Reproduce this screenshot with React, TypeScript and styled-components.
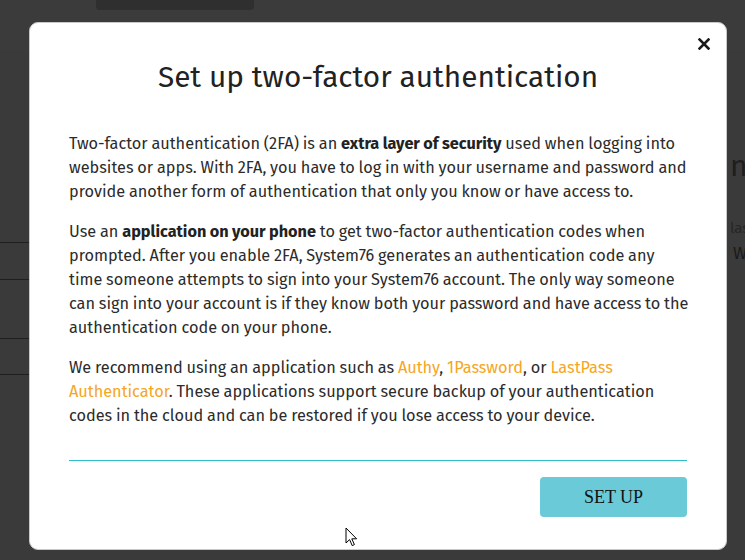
import React from "react";
import styled, { createGlobalStyle } from "styled-components";

const GlobalStyle = createGlobalStyle`
  html, body {
    margin: 0;
    padding: 0;
    background: #3a3a3a;
    overflow: hidden;
  }
  * { box-sizing: border-box; }
`;

const App = () => {
  return (
    <>
      <GlobalStyle />
      <Page>
        <Backdrop>
          <TopBar>
            <Tab />
          </TopBar>
          <Body>
            <Side>
              <SideRow $h={37} />
              <SideRow $h={59} />
              <SideRow $h={37} />
            </Side>
            <Main>
              <BigHeading>nt</BigHeading>
              <MainText>last</MainText>
              <MainText $strong>Wh</MainText>
            </Main>
          </Body>
        </Backdrop>

        <Modal>
          <Close aria-label="close">
            <svg width="12" height="12" viewBox="0 0 12 12">
              <path d="M1.5 1.5 L10.5 10.5 M10.5 1.5 L1.5 10.5" stroke="#1c1c1c" strokeWidth="2.6" strokeLinecap="square" />
            </svg>
          </Close>
          <Title>Set up two-factor authentication</Title>
          <Para>
            Two-factor authentication (2FA) is an <b>extra layer of security</b> used when logging into
            websites or apps. With 2FA, you have to log in with your username and password and
            provide another form of authentication that only you know or have access to.
          </Para>
          <Para>
            Use an <b>application on your phone</b> to get two-factor authentication codes when
            prompted. After you enable 2FA, System76 generates an authentication code any
            time someone attempts to sign into your System76 account. The only way someone
            can sign into your account is if they know both your password and have access to the
            authentication code on your phone.
          </Para>
          <Para>
            We recommend using an application such as <Link>Authy</Link>, <Link>1Password</Link>, or{" "}
            <Link>LastPass Authenticator</Link>. These applications support secure backup of your authentication
            codes in the cloud and can be restored if you lose access to your device.
          </Para>
          <Divider />
          <Footer>
            <SetUpButton>SET UP</SetUpButton>
          </Footer>
        </Modal>

        <Cursor width="13" height="20" viewBox="0 0 13 20">
          <path d="M1 1 L1 16 L4.6 12.6 L7.2 18.6 L9.4 17.6 L6.8 11.8 L11.6 11.8 Z" fill="#fff" stroke="#000" strokeWidth="1" strokeLinejoin="round" />
        </Cursor>
      </Page>
    </>
  );
};

export default App;

const Page = styled.div`
  position: relative;
  width: 745px;
  height: 560px;
  overflow: hidden;
  background: #3a3a3a;
  font-family: "Fira Sans", "Open Sans", "Noto Sans", sans-serif;
`;

const Backdrop = styled.div`
  display: flex;
  flex-direction: column;
  height: 100%;
`;

const TopBar = styled.div`
  height: 50px;
  display: flex;
  padding-left: 96px;
  background: #3b3b3b;
`;

const Tab = styled.div`
  width: 158px;
  height: 10px;
  background: #2f2f2f;
  border-radius: 0 0 4px 4px;
`;

const Body = styled.div`
  flex: 1;
  display: flex;
`;

const Side = styled.div`
  width: 318px;
  padding-top: 192px;
  display: flex;
  flex-direction: column;
`;

const SideRow = styled.div<{ $h: number }>`
  height: ${(p) => p.$h}px;
  border-top: 1px solid #1f1f1f;
  &:last-child {
    border-bottom: 1px solid #1f1f1f;
  }
`;

const Main = styled.div`
  flex: 1;
  min-width: 0;
  padding: 96px 0 0 412px;
  display: flex;
  flex-direction: column;
  white-space: nowrap;
  overflow: hidden;
  color: #1e1e1e;
`;

const BigHeading = styled.div`
  font-size: 30px;
  line-height: 40px;
  margin-bottom: 30px;
`;

const MainText = styled.div<{ $strong?: boolean }>`
  font-size: ${(p) => (p.$strong ? 17 : 15)}px;
  line-height: 25px;
  padding-left: ${(p) => (p.$strong ? 3 : 0)}px;
  color: ${(p) => (p.$strong ? "#1a1a1a" : "#262626")};
`;

const Modal = styled.div`
  position: absolute;
  left: 29px;
  top: 22px;
  width: 698px;
  height: 528px;
  background: #fff;
  border: 1px solid #c9c9c9;
  border-radius: 9px;
  padding: 30px 39px 0 39px;
  display: flex;
  flex-direction: column;
  color: #2b2b2b;
`;

const Close = styled.button`
  position: absolute;
  top: 15px;
  right: 16px;
  width: 12px;
  height: 12px;
  padding: 0;
  border: none;
  background: none;
  display: flex;
`;

const Title = styled.h2`
  margin: 0 0 31px;
  font-size: 29.75px;
  line-height: 48px;
  font-weight: 400;
  text-align: center;
  color: #222;
`;

const Para = styled.p`
  margin: 0 -2.5px 16px 0;
  font-size: 16.3px;
  line-height: 24px;
  word-spacing: -0.5px;
  b {
    font-weight: 700;
    color: #222;
  }
`;

const Link = styled.span`
  color: #f5a623;
`;

const Divider = styled.div`
  margin-top: 16px;
  height: 1px;
  background: #2fbccd;
`;

const Footer = styled.div`
  display: flex;
  justify-content: flex-end;
  padding-top: 16px;
`;

const SetUpButton = styled.button`
  width: 147px;
  height: 40px;
  border: none;
  border-radius: 4px;
  background: #6bcad8;
  color: #111;
  font-family: "Liberation Serif", "Times New Roman", serif;
  font-size: 18px;
`;

const Cursor = styled.svg`
  position: absolute;
  left: 345px;
  top: 527px;
`;
